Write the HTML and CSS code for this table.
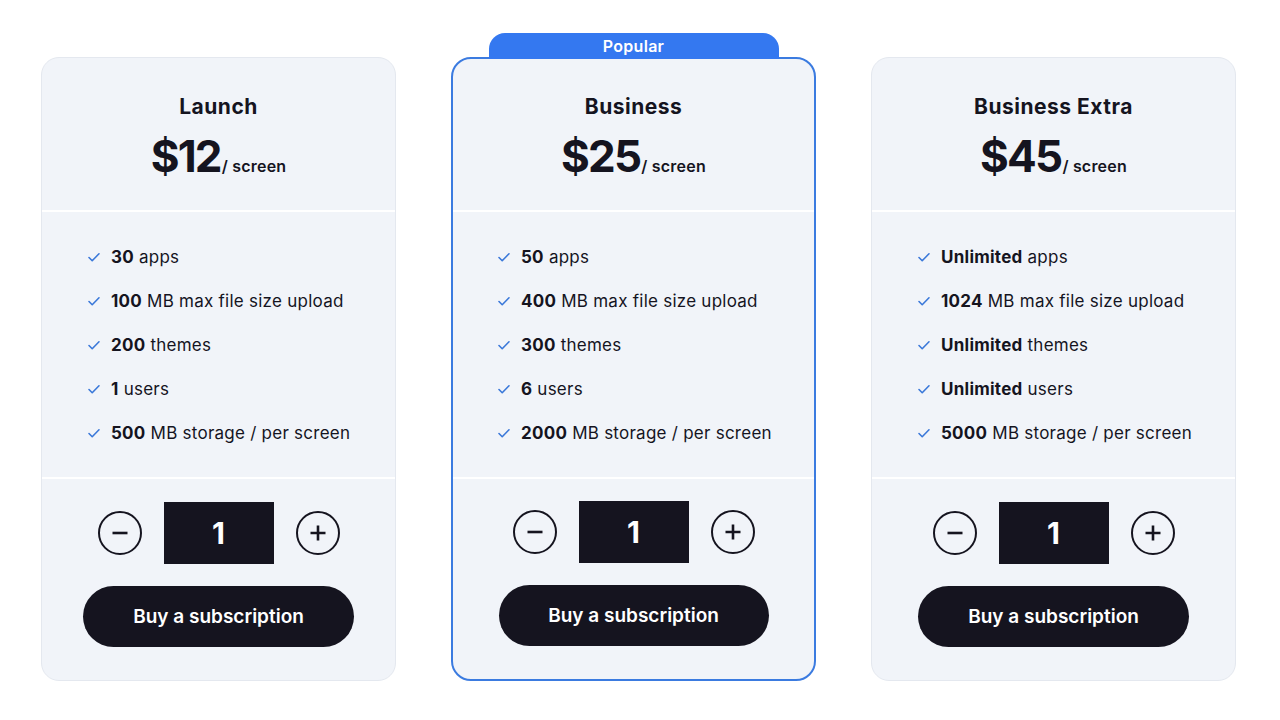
FILE: index.html
```html
<!DOCTYPE html>
<html lang="en">
<head>
<meta charset="utf-8">
<title>Pricing</title>
<link rel="stylesheet" href="styles.css">
</head>
<body>
<main class="plans">
  <section class="card">
    <header class="card-head">
      <h2 class="plan-name">Launch</h2>
      <div class="price"><span class="amount">$12</span><span class="unit">/ screen</span></div>
    </header>
    <ul class="features">
      <li><svg class="check" viewBox="0 0 14 14"><path d="M2 7.5l3.2 3.2L12 3.8"/></svg><span><b>30</b> apps</span></li>
      <li><svg class="check" viewBox="0 0 14 14"><path d="M2 7.5l3.2 3.2L12 3.8"/></svg><span><b>100</b> MB max file size upload</span></li>
      <li><svg class="check" viewBox="0 0 14 14"><path d="M2 7.5l3.2 3.2L12 3.8"/></svg><span><b>200</b> themes</span></li>
      <li><svg class="check" viewBox="0 0 14 14"><path d="M2 7.5l3.2 3.2L12 3.8"/></svg><span><b>1</b> users</span></li>
      <li><svg class="check" viewBox="0 0 14 14"><path d="M2 7.5l3.2 3.2L12 3.8"/></svg><span><b>500</b> MB storage / per screen</span></li>
    </ul>
    <div class="card-foot">
      <div class="counter">
        <button class="round" aria-label="decrease"><svg viewBox="0 0 44 44"><circle cx="22" cy="22" r="21"/><path d="M14.5 22h15"/></svg></button>
        <div class="qty">1</div>
        <button class="round" aria-label="increase"><svg viewBox="0 0 44 44"><circle cx="22" cy="22" r="21"/><path d="M14.5 22h15M22 14.5v15"/></svg></button>
      </div>
      <button class="buy">Buy a subscription</button>
    </div>
  </section>

  <section class="card popular">
    <div class="badge">Popular</div>
    <header class="card-head">
      <h2 class="plan-name">Business</h2>
      <div class="price"><span class="amount">$25</span><span class="unit">/ screen</span></div>
    </header>
    <ul class="features">
      <li><svg class="check" viewBox="0 0 14 14"><path d="M2 7.5l3.2 3.2L12 3.8"/></svg><span><b>50</b> apps</span></li>
      <li><svg class="check" viewBox="0 0 14 14"><path d="M2 7.5l3.2 3.2L12 3.8"/></svg><span><b>400</b> MB max file size upload</span></li>
      <li><svg class="check" viewBox="0 0 14 14"><path d="M2 7.5l3.2 3.2L12 3.8"/></svg><span><b>300</b> themes</span></li>
      <li><svg class="check" viewBox="0 0 14 14"><path d="M2 7.5l3.2 3.2L12 3.8"/></svg><span><b>6</b> users</span></li>
      <li><svg class="check" viewBox="0 0 14 14"><path d="M2 7.5l3.2 3.2L12 3.8"/></svg><span><b>2000</b> MB storage / per screen</span></li>
    </ul>
    <div class="card-foot">
      <div class="counter">
        <button class="round" aria-label="decrease"><svg viewBox="0 0 44 44"><circle cx="22" cy="22" r="21"/><path d="M14.5 22h15"/></svg></button>
        <div class="qty">1</div>
        <button class="round" aria-label="increase"><svg viewBox="0 0 44 44"><circle cx="22" cy="22" r="21"/><path d="M14.5 22h15M22 14.5v15"/></svg></button>
      </div>
      <button class="buy">Buy a subscription</button>
    </div>
  </section>

  <section class="card">
    <header class="card-head">
      <h2 class="plan-name">Business Extra</h2>
      <div class="price"><span class="amount">$45</span><span class="unit">/ screen</span></div>
    </header>
    <ul class="features">
      <li><svg class="check" viewBox="0 0 14 14"><path d="M2 7.5l3.2 3.2L12 3.8"/></svg><span><b>Unlimited</b> apps</span></li>
      <li><svg class="check" viewBox="0 0 14 14"><path d="M2 7.5l3.2 3.2L12 3.8"/></svg><span><b>1024</b> MB max file size upload</span></li>
      <li><svg class="check" viewBox="0 0 14 14"><path d="M2 7.5l3.2 3.2L12 3.8"/></svg><span><b>Unlimited</b> themes</span></li>
      <li><svg class="check" viewBox="0 0 14 14"><path d="M2 7.5l3.2 3.2L12 3.8"/></svg><span><b>Unlimited</b> users</span></li>
      <li><svg class="check" viewBox="0 0 14 14"><path d="M2 7.5l3.2 3.2L12 3.8"/></svg><span><b>5000</b> MB storage / per screen</span></li>
    </ul>
    <div class="card-foot">
      <div class="counter">
        <button class="round" aria-label="decrease"><svg viewBox="0 0 44 44"><circle cx="22" cy="22" r="21"/><path d="M14.5 22h15"/></svg></button>
        <div class="qty">1</div>
        <button class="round" aria-label="increase"><svg viewBox="0 0 44 44"><circle cx="22" cy="22" r="21"/><path d="M14.5 22h15M22 14.5v15"/></svg></button>
      </div>
      <button class="buy">Buy a subscription</button>
    </div>
  </section>
</main>
</body>
</html>
```

FILE: styles.css
```css
* { box-sizing: border-box; }

html, body {
  margin: 0;
  padding: 0;
  background: #ffffff;
}

body {
  font-family: "Inter", "Noto Sans", sans-serif;
  color: #15141f;
}

.plans {
  display: grid;
  grid-template-columns: 355px 365px 365px;
  column-gap: 55px;
  padding: 57px 0 0 41px;
}

.card {
  position: relative;
  height: 624px;
  background: #f1f4f9;
  border: 1px solid #e4e8ef;
  border-radius: 18px;
  display: flex;
  flex-direction: column;
}

.card.popular {
  border: 2px solid #3b7be0;
  border-radius: 20px;
}

.badge {
  position: absolute;
  top: -26px;
  left: 50%;
  transform: translateX(-50%);
  width: 290px;
  height: 26px;
  background: #3478f0;
  color: #ffffff;
  border-radius: 16px 16px 0 0;
  font-family: "Inter", sans-serif;
  font-weight: 600;
  font-size: 16px;
  letter-spacing: 0.3px;
  line-height: 26px;
  text-align: center;
}

.card-head {
  height: 154px;
  border-bottom: 2px solid #ffffff;
  display: flex;
  flex-direction: column;
  align-items: center;
  padding-top: 36px;
}
.popular .card-head { height: 153px; padding-top: 35px; }

.plan-name {
  margin: 0;
  font-family: "Inter", sans-serif;
  font-weight: 700;
  font-size: 21px;
  line-height: 26px;
  letter-spacing: 0.5px;
}

.price {
  margin-top: 9px;
  display: flex;
  align-items: baseline;
}

.amount {
  font-family: "Inter", sans-serif;
  font-weight: 700;
  font-size: 44px;
  line-height: 54px;
  letter-spacing: -1.8px;
}

.unit {
  font-family: "Inter", sans-serif;
  font-weight: 600;
  font-size: 16px;
  letter-spacing: 0.2px;
  margin-left: 1px;
}

.features {
  list-style: none;
  margin: 0;
  height: 267px;
  border-bottom: 2px solid #ffffff;
  padding: 33px 0 0 45px;
  display: flex;
  flex-direction: column;
  gap: 20px;
}
.popular .features { padding-left: 44px; }

.features li {
  display: flex;
  align-items: center;
  height: 24px;
  font-size: 17px;
  letter-spacing: 0.25px;
  color: #15141f;
}

.features b { font-weight: 700; }

.check {
  width: 14px;
  height: 14px;
  margin-right: 10px;
  fill: none;
  stroke: #3a78d9;
  stroke-width: 1.6;
  stroke-linecap: round;
  stroke-linejoin: round;
}

.card-foot {
  flex: 1;
  display: flex;
  flex-direction: column;
  align-items: center;
  padding-top: 23px;
}
.popular .card-foot { padding-top: 22px; }

.counter {
  display: flex;
  align-items: center;
  gap: 22px;
}

.round {
  width: 44px;
  height: 44px;
  padding: 0;
  border: 0;
  background: transparent;
}
.round svg {
  width: 44px;
  height: 44px;
  display: block;
  fill: none;
  stroke: #15141f;
  stroke-width: 2;
  stroke-linecap: butt;
}
.round svg path { stroke-width: 2.6; }

.qty {
  width: 110px;
  height: 62px;
  background: #15141f;
  color: #ffffff;
  font-weight: 700;
  font-size: 30px;
  display: flex;
  align-items: center;
  justify-content: center;
}

.buy {
  margin-top: 22px;
  width: 271px;
  height: 61px;
  border: 0;
  border-radius: 31px;
  background: #15141f;
  color: #ffffff;
  font-family: "Inter", sans-serif;
  font-weight: 600;
  font-size: 19px;
}
.popular .buy { width: 270px; }
```
